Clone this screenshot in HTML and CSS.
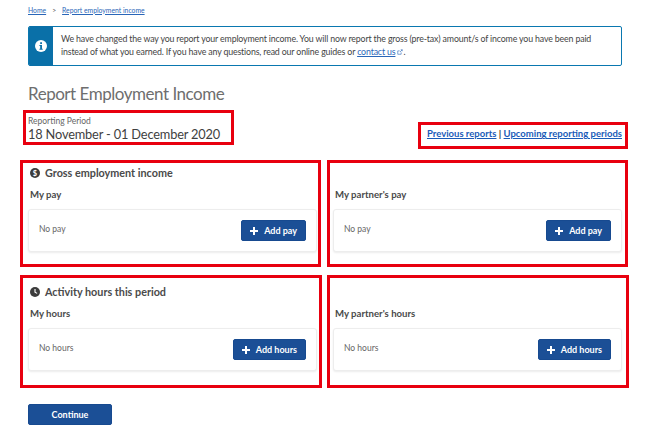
FILE: index.html
```html
<!DOCTYPE html>
<html lang="en">
<head>
<meta charset="utf-8">
<title>Report Employment Income</title>
<link rel="stylesheet" href="styles.css">
</head>
<body>
<main class="page">
  <nav class="crumbs"><a href="#">Home</a><span class="sep">&gt;</span><a href="#">Report employment income</a></nav>
  <div class="alert">
    <div class="alert-side">
      <svg class="alert-icon" viewBox="0 0 16 16"><circle cx="8" cy="8" r="8" fill="#fff"/><rect x="6.900" y="3" width="2.400" height="2.400" fill="#0a70a8"/><path d="M5.900 6.600h3.400v5h1v1.400H5.900v-1.400h1v-3.600h-1z" fill="#0a70a8"/></svg>
    </div>
    <p>We have changed the way you report your employment income. You will now report the gross (pre-tax) amount/s of income you have been paid instead of what you earned. If you have any questions, read our online guides or <a href="#">contact us</a><svg class="ext" viewBox="0 0 8 8"><path d="M5.500 4.500V7H1V2.500h2.500M4 4l3-3M5 1h2v2" fill="none" stroke="#2a66b8" stroke-width=".8"/></svg>.</p>
  </div>
  <h1>Report Employment Income</h1>
  <div class="period-row">
    <div class="period mark">
      <div class="period-label">Reporting Period</div>
      <div class="period-date">18 November - 01 December 2020</div>
    </div>
    <div class="links mark"><a href="#">Previous reports</a> | <a href="#">Upcoming reporting periods</a></div>
  </div>
  <div class="grid">
    <section class="cell mark mark-a">
      <h2><svg class="head-icon" viewBox="0 0 16 16"><circle cx="8" cy="8" r="8" fill="#3c3c3c"/><text x="8" y="12" text-anchor="middle" class="dollar">$</text></svg>Gross employment income</h2>
      <h3>My pay</h3>
      <div class="card"><span class="empty">No pay</span><button class="btn"><span class="plus"></span>Add pay</button></div>
    </section>
    <section class="cell mark mark-b">
      <div class="head-space"></div>
      <h3>My partner's pay</h3>
      <div class="card"><span class="empty">No pay</span><button class="btn"><span class="plus"></span>Add pay</button></div>
    </section>
    <section class="cell mark mark-c">
      <h2><svg class="head-icon" viewBox="0 0 16 16"><circle cx="8" cy="8" r="8" fill="#3c3c3c"/><path d="M8 3.200v5l3.400 2" fill="none" stroke="#fff" stroke-width="1.800"/></svg>Activity hours this period</h2>
      <h3>My hours</h3>
      <div class="card"><span class="empty">No hours</span><button class="btn"><span class="plus"></span>Add hours</button></div>
    </section>
    <section class="cell mark mark-d">
      <div class="head-space"></div>
      <h3>My partner's hours</h3>
      <div class="card"><span class="empty">No hours</span><button class="btn"><span class="plus"></span>Add hours</button></div>
    </section>
  </div>
  <button class="continue">Continue</button>
</main>
</body>
</html>
```
FILE: styles.css
```css
* { box-sizing: border-box; }
html, body { margin: 0; background: #fff; }
body { font-family: Lato, "Open Sans", "Liberation Sans", sans-serif; color: #3f3f3f; }
.page { width: 650px; height: 439px; padding: 6px 28px 0; overflow: hidden; }
a { color: #2a66b8; }
.crumbs { height: 20px; padding-top: 0.5px; font-size: 6.800px; line-height: 7px; color: #555; }
.crumbs .sep { margin: 0 6px; }
.alert { display: flex; height: 40px; border: 1px solid #0a78b0; border-radius: 2px; }
.alert-side { width: 24px; margin: -1px 0; background: #0a70a8; display: flex; align-items: center; justify-content: center; border-radius: 2px 0 0 2px; flex: none; }
.alert-icon { width: 12px; height: 12px; }
.alert p { margin: 0; padding: 6px 20px 0 8px; font-size: 8.800px; letter-spacing: -.15px; line-height: 12.600px; color: #444; }
.ext { width: 6px; height: 6px; margin-left: 2px; }
h1 { margin: 16px 0 0; font-size: 17px; letter-spacing: -.47px; line-height: 24px; font-weight: 400; color: #6e6e6e; }
.period-row { display: flex; justify-content: space-between; align-items: flex-start; height: 57px; }
.period { padding-top: 9px; }
.period-label { font-size: 8.500px; line-height: 12px; color: #666; }
.period-date { font-size: 12.800px; letter-spacing: -.17px; line-height: 15px; color: #3f3f3f; white-space: nowrap; }
.links { margin-top: 22px; font-size: 9.500px; font-weight: 700; line-height: 12px; color: #333; white-space: nowrap; }
.links a { color: #1a5bb8; }
.mark { position: relative; }
.mark::after { content: ""; position: absolute; border: 3px solid #e8000f; pointer-events: none; }
.period::after { left: -5px; right: -14px; top: 4px; bottom: -3px; }
.links::after { left: -9px; right: -6px; top: -6px; bottom: -9px; }
.grid { display: grid; grid-template-columns: 289px 289px; grid-template-rows: 119px 122px; column-gap: 16px; }
.mark-a::after { left: -8px; right: -4px; top: -3px; bottom: 15px; }
.mark-b::after { left: -6px; right: -6px; top: -3px; bottom: 15px; }
.mark-c::after { left: -8px; right: -5px; top: -7px; bottom: 16px; }
.mark-d::after { left: -6px; right: -7px; top: -7px; bottom: 16px; }
h2 { display: flex; align-items: center; gap: 5px; margin: 0; height: 19px; padding: 0 0 0 2px; font-size: 10.800px; font-weight: 700; color: #4a4a4a; }
.head-space { height: 19px; }
.head-icon { width: 10px; height: 10px; flex: none; }
.dollar { font-size: 12px; font-weight: 700; fill: #fff; }
h3 { margin: 2px 0 3px 2px; height: 22px; font-size: 9.600px; line-height: 22px; font-weight: 700; color: #4a4a4a; }
.card { display: flex; justify-content: space-between; align-items: center; height: 43px; padding: 0 10px; background: #fff; border: 1px solid #ededed; border-radius: 3px; box-shadow: 0 1px 2px rgba(0,0,0,.08); }
.empty { font-size: 8.500px; color: #666; margin-top: -3px; }
.btn { display: flex; align-items: center; height: 21px; padding: 0 8px; background: #1b4f96; color: #fff; border: 1px solid #174a90; border-radius: 2px; font: 700 9px Lato, sans-serif; }
.plus { width: 8px; height: 8px; margin-right: 6px; background: linear-gradient(#fff,#fff) center/100% 2px no-repeat, linear-gradient(#fff,#fff) center/2px 100% no-repeat; }
.continue { display: block; width: 84px; height: 21px; background: #1b4f96; color: #fff; border: 1px solid #174a90; border-radius: 2px; font: 700 9px Lato, sans-serif; }
```
